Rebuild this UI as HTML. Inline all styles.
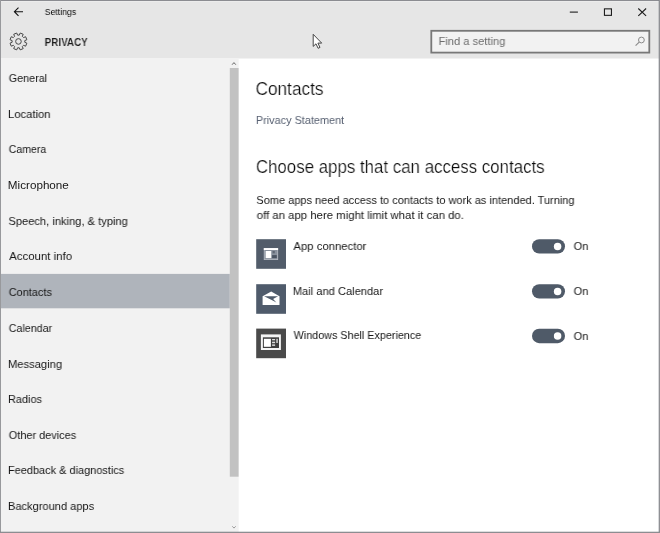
<!DOCTYPE html>
<html>
<head>
<meta charset="utf-8">
<title>Settings</title>
<style>
html,body{margin:0;padding:0;}
body{width:660px;height:533px;overflow:hidden;background:#fff;font-family:"Liberation Sans",sans-serif;color:#1a1a1a;position:relative;}
.abs{position:absolute;}
.t{position:absolute;white-space:nowrap;line-height:1;font-variant-ligatures:none;font-feature-settings:"liga" 0,"clig" 0,"kern" 1;transform-origin:0 50%;will-change:transform;}
</style>
</head>
<body>
<svg class="abs" style="left:0;top:0" width="660" height="533" viewBox="0 0 660 533">
  <rect x="0" y="0" width="660" height="58.500" fill="#e6e6e6"/>
  <rect x="0" y="58.500" width="238.700" height="474.500" fill="#f2f2f2"/>
  <rect x="0" y="273.900" width="229.800" height="34.400" fill="#afb4bb"/>
  <rect x="229.800" y="68" width="8.800" height="408.700" fill="#c2c2c2"/>
  <rect x="431.300" y="30.800" width="218" height="21.800" fill="#f2f2f2" stroke="#787878" stroke-width="1.800"/>
  <g transform="translate(256.200 239.200)"><rect x="0" y="0" width="29.800" height="29.600" fill="#525c6a"/><rect x="7.600" y="8.900" width="14.300" height="11.900" fill="#b9bec6"/><rect x="7.600" y="8.900" width="14.300" height="1.900" fill="#fff"/><rect x="8.300" y="10.800" width="12.900" height="9.300" fill="#89919d"/><rect x="9.500" y="11.800" width="5.500" height="7.100" fill="#fff"/><rect x="15.900" y="15.900" width="4.700" height="3" fill="#4a5462"/><rect x="16.400" y="11.800" width="2.200" height="2.300" fill="#5f6875"/></g>
  <g transform="translate(256.200 284.200)"><rect x="0" y="0" width="29.800" height="29.600" fill="#4f5b6b"/><path d="M6.400 12.100L15 7.300L23.300 12.100V20.800H6.400Z" fill="#fff"/><path d="M7.900 12H21.900L16.900 14.900L20.200 18.200L15.500 15.700Z" fill="#4f5b6b"/></g>
  <g transform="translate(256.200 328.600)"><rect x="0" y="0" width="29.800" height="29.600" fill="#4a4a4a"/><rect x="4.700" y="5.800" width="20" height="15.600" fill="#f4f4f4"/><rect x="6.700" y="8.700" width="16.100" height="10.700" fill="#3e3e3e"/><rect x="7.700" y="10.200" width="7" height="8" fill="#fff"/><rect x="15.900" y="10.400" width="3" height="1.300" fill="#e0e0e0"/><rect x="15.900" y="13.100" width="3" height="1.500" fill="#e0e0e0"/><rect x="15.900" y="15.700" width="3" height="1.700" fill="#c8c8c8"/><rect x="20.100" y="10.200" width="1.500" height="4.200" fill="#d0d0d0"/></g>
  <rect x="532" y="239.20" width="33" height="14.400" rx="7.200" fill="#4f5a68"/><circle cx="557.600" cy="246.45" r="3.750" fill="#fff"/>
  <rect x="532" y="284.15" width="33" height="14.400" rx="7.200" fill="#4f5a68"/><circle cx="557.600" cy="291.45" r="3.750" fill="#fff"/>
  <rect x="532" y="328.75" width="33" height="14.400" rx="7.200" fill="#4f5a68"/><circle cx="557.600" cy="336.00" r="3.750" fill="#fff"/>
</svg>

<!-- title bar icons -->
<svg class="abs" style="left:13px;top:6px" width="12" height="12" viewBox="0 0 12 12"><path d="M10 5.700H1.600M5.500 1.600L1.400 5.700L5.500 9.800" fill="none" stroke="#111" stroke-width="1.100"/></svg>
<svg class="abs" style="left:565px;top:4px" width="90" height="18" viewBox="0 0 90 18">
  <path d="M4.800 8.100H12.900" stroke="#1e1e1e" stroke-width="1.100" fill="none"/>
  <rect x="39.450" y="4.850" width="7" height="6.500" stroke="#1e1e1e" stroke-width="1.100" fill="none"/>
  <path d="M73.300 4.500L81.100 11.800M81.100 4.500L73.300 11.800" stroke="#1e1e1e" stroke-width="1.100" fill="none"/>
</svg>

<!-- gear -->
<svg class="abs" style="left:8px;top:31px" width="21" height="21" viewBox="-10.450 -10.450 21 21">
  <path d="M6.34 0.85L8.42 1.73L7.18 4.73L5.08 3.89L3.89 5.08L4.73 7.18L1.73 8.42L0.85 6.34L-0.85 6.34L-1.73 8.42L-4.73 7.18L-3.89 5.08L-5.08 3.89L-7.18 4.73L-8.42 1.73L-6.34 0.85L-6.34 -0.85L-8.42 -1.73L-7.18 -4.73L-5.08 -3.89L-3.89 -5.08L-4.73 -7.18L-1.73 -8.42L-0.85 -6.34L0.85 -6.34L1.73 -8.42L4.73 -7.18L3.89 -5.08L5.08 -3.89L7.18 -4.73L8.42 -1.73L6.34 -0.85Z" fill="none" stroke="#474747" stroke-width="1" stroke-linejoin="round"/>
  <circle cx="0" cy="0" r="2.800" fill="none" stroke="#474747" stroke-width="1"/>
</svg>

<!-- cursor -->
<svg class="abs" style="left:312px;top:33px" width="12" height="17" viewBox="-1 -1 12 17"><path d="M0.200 0.300V12.400L3 9.800L5.100 14.300L7 13.400L4.900 9.100H8.700Z" fill="#fff" stroke="#333" stroke-width="0.900" stroke-linejoin="round"/></svg>

<!-- search -->
<svg class="abs" style="left:634px;top:34px" width="12" height="13" viewBox="0 0 12 13"><circle cx="7.400" cy="6" r="2.900" fill="none" stroke="#8a8a8a" stroke-width="1"/><path d="M5.200 8.200L1.600 11.700" stroke="#8a8a8a" stroke-width="1.100" fill="none"/></svg>

<!-- scrollbar arrows -->
<svg class="abs" style="left:229px;top:59px" width="10" height="9" viewBox="0 0 10 9"><path d="M3.100 5.700L4.950 3.600L6.800 5.700" fill="none" stroke="#666" stroke-width="1"/></svg>
<svg class="abs" style="left:229px;top:523px" width="10" height="8" viewBox="0 0 10 8"><path d="M3.300 3.300L5 5.100L6.700 3.300" fill="none" stroke="#9a9a9a" stroke-width="1"/></svg>

<!-- texts -->
<div class="t" id="t-settings" style="left:44px;top:6.65px;font-size:9.70px;color:#0a0a0a;transform:translateX(0.73px) scaleX(0.8978)">Settings</div>
<div class="t" id="t-privacy" style="left:44px;top:36.55px;font-size:10.90px;color:#1a1a1a;font-weight:bold;transform:translateX(0.64px) scaleX(0.9058);-webkit-text-stroke:0.12px #e6e6e6">PRIVACY</div>
<div class="t" id="t-find" style="left:438px;top:36.25px;font-size:11.50px;color:#6d6d6d;transform:translateX(0.59px) scaleX(0.9660)">Find a setting</div>
<div class="t" id="t-n0" style="left:8px;top:73.25px;font-size:11.50px;color:#161616;transform:translateX(0.75px) scaleX(0.9374)">General</div>
<div class="t" id="t-n1" style="left:7px;top:109.25px;font-size:11.50px;color:#161616;transform:translateX(0.94px) scaleX(0.9801)">Location</div>
<div class="t" id="t-n2" style="left:8px;top:144.25px;font-size:11.50px;color:#161616;transform:translateX(0.75px) scaleX(0.9153)">Camera</div>
<div class="t" id="t-n3" style="left:7px;top:180.25px;font-size:11.50px;color:#161616;transform:translateX(0.87px) scaleX(1.0146)">Microphone</div>
<div class="t" id="t-n4" style="left:8px;top:216.25px;font-size:11.50px;color:#161616;transform:translateX(0.43px) scaleX(0.9672)">Speech, inking, &amp; typing</div>
<div class="t" id="t-n5" style="left:9px;top:251.25px;font-size:11.50px;color:#161616;transform:translateX(0.18px) scaleX(0.9929)">Account info</div>
<div class="t" id="t-n6" style="left:8px;top:287.25px;font-size:11.50px;color:#161616;transform:translateX(0.75px) scaleX(0.9488)">Contacts</div>
<div class="t" id="t-n7" style="left:8px;top:323.25px;font-size:11.50px;color:#161616;transform:translateX(0.75px) scaleX(0.9293)">Calendar</div>
<div class="t" id="t-n8" style="left:7px;top:359.25px;font-size:11.50px;color:#161616;transform:translateX(0.94px) scaleX(0.9740)">Messaging</div>
<div class="t" id="t-n9" style="left:7px;top:394.25px;font-size:11.50px;color:#161616;transform:translateX(0.97px) scaleX(0.9501)">Radios</div>
<div class="t" id="t-n10" style="left:8px;top:430.25px;font-size:11.50px;color:#161616;transform:translateX(0.76px) scaleX(0.9506)">Other devices</div>
<div class="t" id="t-n11" style="left:7px;top:465.25px;font-size:11.50px;color:#161616;transform:translateX(0.96px) scaleX(0.9528)">Feedback &amp; diagnostics</div>
<div class="t" id="t-n12" style="left:7px;top:501.25px;font-size:11.50px;color:#161616;transform:translateX(0.95px) scaleX(0.9638)">Background apps</div>
<div class="t" id="t-title" style="left:255px;top:79.00px;font-size:19.00px;color:#0c0c0c;transform:translateX(0.59px) scaleX(0.9046);-webkit-text-stroke:0.24px #fff">Contacts</div>
<div class="t" id="t-ps" style="left:255px;top:115.25px;font-size:11.50px;color:#586172;transform:translateX(0.86px) scaleX(0.9464)">Privacy Statement</div>
<div class="t" id="t-h2" style="left:255px;top:157.00px;font-size:19.00px;color:#0c0c0c;transform:translateX(0.87px) scaleX(0.8877);-webkit-text-stroke:0.24px #fff">Choose apps that can access contacts</div>
<div class="t" id="t-p1" style="left:256px;top:195.25px;font-size:11.50px;color:#161616;transform:translateX(0.32px) scaleX(0.9573)">Some apps need access to contacts to work as intended. Turning</div>
<div class="t" id="t-p2" style="left:256px;top:210.25px;font-size:11.50px;color:#161616;transform:translateX(0.69px) scaleX(0.9892)">off an app here might limit what it can do.</div>
<div class="t" id="t-a1" style="left:293px;top:241.25px;font-size:11.50px;color:#161616;transform:translateX(0.41px) scaleX(0.9844)">App connector</div>
<div class="t" id="t-a2" style="left:292px;top:286.25px;font-size:11.50px;color:#161616;transform:translateX(0.78px) scaleX(0.9676)">Mail and Calendar</div>
<div class="t" id="t-a3" style="left:293px;top:330.25px;font-size:11.50px;color:#161616;transform:translateX(0.66px) scaleX(0.9370)">Windows Shell Experience</div>
<div class="t" id="t-o1" style="left:573px;top:241.25px;font-size:11.50px;color:#161616;transform:translateX(0.63px) scaleX(0.9631)">On</div>
<div class="t" id="t-o2" style="left:573px;top:286.25px;font-size:11.50px;color:#161616;transform:translateX(0.63px) scaleX(0.9631)">On</div>
<div class="t" id="t-o3" style="left:573px;top:331.25px;font-size:11.50px;color:#161616;transform:translateX(0.63px) scaleX(0.9631)">On</div>

<!-- window border -->
<div class="abs" style="left:0;top:0;width:660px;height:1px;background:#8b8c91;"></div>
<div class="abs" style="left:0;top:1px;width:660px;height:1px;background:rgba(255,255,255,0.25);"></div>
<div class="abs" style="left:0;top:0;width:1px;height:533px;background:#98999c;"></div>
<div class="abs" style="left:658px;top:0;width:1px;height:533px;background:rgba(120,122,128,0.28);"></div>
<div class="abs" style="left:659px;top:0;width:1px;height:533px;background:#8f9094;"></div>
<div class="abs" style="left:0;top:531px;width:660px;height:1px;background:rgba(120,122,128,0.25);"></div>
<div class="abs" style="left:0;top:532px;width:660px;height:1px;background:#8c8d91;"></div>
</body>
</html>
